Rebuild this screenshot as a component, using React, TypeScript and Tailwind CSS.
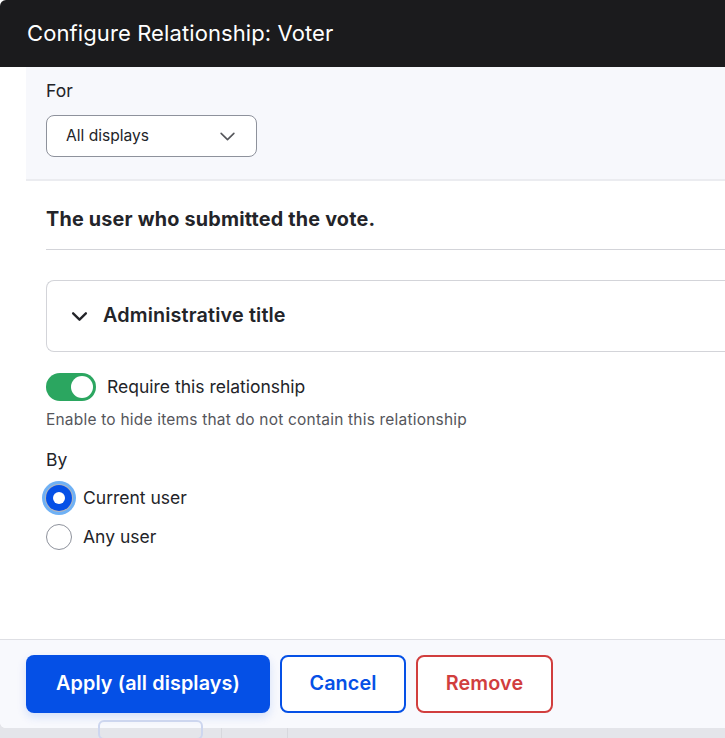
import { useState } from 'react';

function ChevronDown({ className, strokeWidth = 1.5 }: { className?: string; strokeWidth?: number }) {
  return (
    <svg viewBox="0 0 16 16" fill="none" className={className}>
      <path d="M2 5l6 6 6-6" stroke="currentColor" strokeWidth={strokeWidth} strokeLinecap="round" strokeLinejoin="round" />
    </svg>
  );
}

function Radio({ checked }: { checked: boolean }) {
  return checked ? (
    <span className="w-[26px] h-[26px] rounded-full bg-[#0550e6] flex items-center justify-center shadow-[0_0_0_1px_#b2b5bd,0_0_0_4px_#6fb1f5]">
      <span className="w-[12px] h-[12px] rounded-full bg-white" />
    </span>
  ) : (
    <span className="w-[26px] h-[26px] rounded-full border border-[#8e929c] bg-white" />
  );
}

export default function App() {
  const [required, setRequired] = useState(true);
  const [by, setBy] = useState<'current' | 'any'>('current');

  return (
    <div
      className="w-[725px] h-[738px] overflow-hidden bg-[#e4e5ea] flex flex-col"
      style={{ fontFamily: 'Inter, "Noto Sans", sans-serif' }}
    >
      {/* dialog */}
      <div className="flex flex-col bg-white rounded-bl-[6px] overflow-hidden shrink-0 h-[728px]">
        <div className="h-[67px] bg-[#1b1b1d] rounded-tl-[6px] flex items-center pl-[27px] shrink-0">
          <h1 className="text-white text-[22px] tracking-[0.1px]">Configure Relationship: Voter</h1>
        </div>

        <div className="flex-1 pl-[26px]">
          <div className="bg-[#f7f8fc] border-b-2 border-[#ebecf0] pl-[20px] pt-[13px] pb-[22px]">
            <div className="text-[17.5px] text-[#232429] leading-[22px]">For</div>
            <button className="mt-[13px] w-[211px] h-[42px] border border-[#8e929c] rounded-[8px] bg-white flex items-center justify-between pl-[19px] pr-[20px] text-[15.6px] text-[#232429]">
              <span>All displays</span>
              <ChevronDown className="w-[17px] h-[17px] text-[#55565b]" />
            </button>
          </div>

          <div className="pl-[20px]">
            <h2 className="mt-[25px] text-[19.8px] font-bold text-[#232429] leading-[26px] tracking-[0.2px]">
              The user who submitted the vote.
            </h2>
            <div className="mt-[17px] border-t border-[#d3d4d9]" />

            <div className="mt-[30px] h-[72px] border border-r-0 border-[#d3d4d9] rounded-l-[8px] flex items-center pl-[24px]">
              <ChevronDown className="w-[17px] h-[17px] text-[#232429]" strokeWidth={2.2} />
              <span className="ml-[15px] text-[19.8px] font-semibold text-[#232429] tracking-[0.15px]">
                Administrative title
              </span>
            </div>

            <label className="mt-[21px] flex items-center gap-[11px] cursor-pointer">
              <button
                type="button"
                onClick={() => setRequired(!required)}
                className={
                  required
                    ? 'w-[50px] h-[28px] rounded-full bg-[#2ba660] flex items-center justify-end pr-[3px]'
                    : 'w-[50px] h-[28px] rounded-full bg-[#8e929c] flex items-center justify-start pl-[3px]'
                }
              >
                <span className="w-[22px] h-[22px] rounded-full bg-white" />
              </button>
              <span className="text-[17.5px] text-[#232429] leading-[24px]">Require this relationship</span>
            </label>
            <p className="mt-[9px] text-[15.5px] text-[#55565b] leading-[20px] tracking-[0.2px]">
              Enable to hide items that do not contain this relationship
            </p>

            <div className="mt-[19px] text-[17.5px] text-[#232429] leading-[22px]">By</div>
            <div className="mt-[14px] flex flex-col gap-[13px]">
              <label className="flex items-center gap-[11px] cursor-pointer" onClick={() => setBy('current')}>
                <Radio checked={by === 'current'} />
                <span className="text-[17.5px] text-[#232429] leading-[24px]">Current user</span>
              </label>
              <label className="flex items-center gap-[11px] cursor-pointer" onClick={() => setBy('any')}>
                <Radio checked={by === 'any'} />
                <span className="text-[17.5px] text-[#232429] leading-[24px]">Any user</span>
              </label>
            </div>
          </div>
        </div>

        <div className="h-[89px] shrink-0 bg-[#f8f9fd] border-t border-[#dedfe4] flex items-start pt-[15px] pl-[26px] gap-[10px]">
          <button className="h-[58px] w-[244px] rounded-[8px] bg-[#0550e6] text-white text-[19.8px] font-semibold tracking-[0.1px] shadow-[0_4px_10px_rgba(5,80,230,0.15)]">
            Apply (all displays)
          </button>
          <button className="h-[58px] w-[126px] rounded-[8px] border-2 border-[#0550e6] bg-white text-[#0550e6] text-[19.8px] font-semibold tracking-[0.1px]">
            Cancel
          </button>
          <button className="h-[58px] w-[137px] rounded-[8px] border-2 border-[#d13e3e] bg-white text-[#d13e3e] text-[19.8px] font-semibold tracking-[0.1px]">
            Remove
          </button>
        </div>
      </div>

      {/* page behind the dialog */}
      <div className="flex-1 flex pl-[98px]">
        <div className="w-[105px] h-[20px] border-2 border-[#cdd6ef] rounded-[6px] -mt-[8px]" />
        <div className="ml-[18px] border-l border-[#d7d8dd]" />
        <div className="ml-[65px] border-l border-[#d7d8dd]" />
      </div>
    </div>
  );
}
